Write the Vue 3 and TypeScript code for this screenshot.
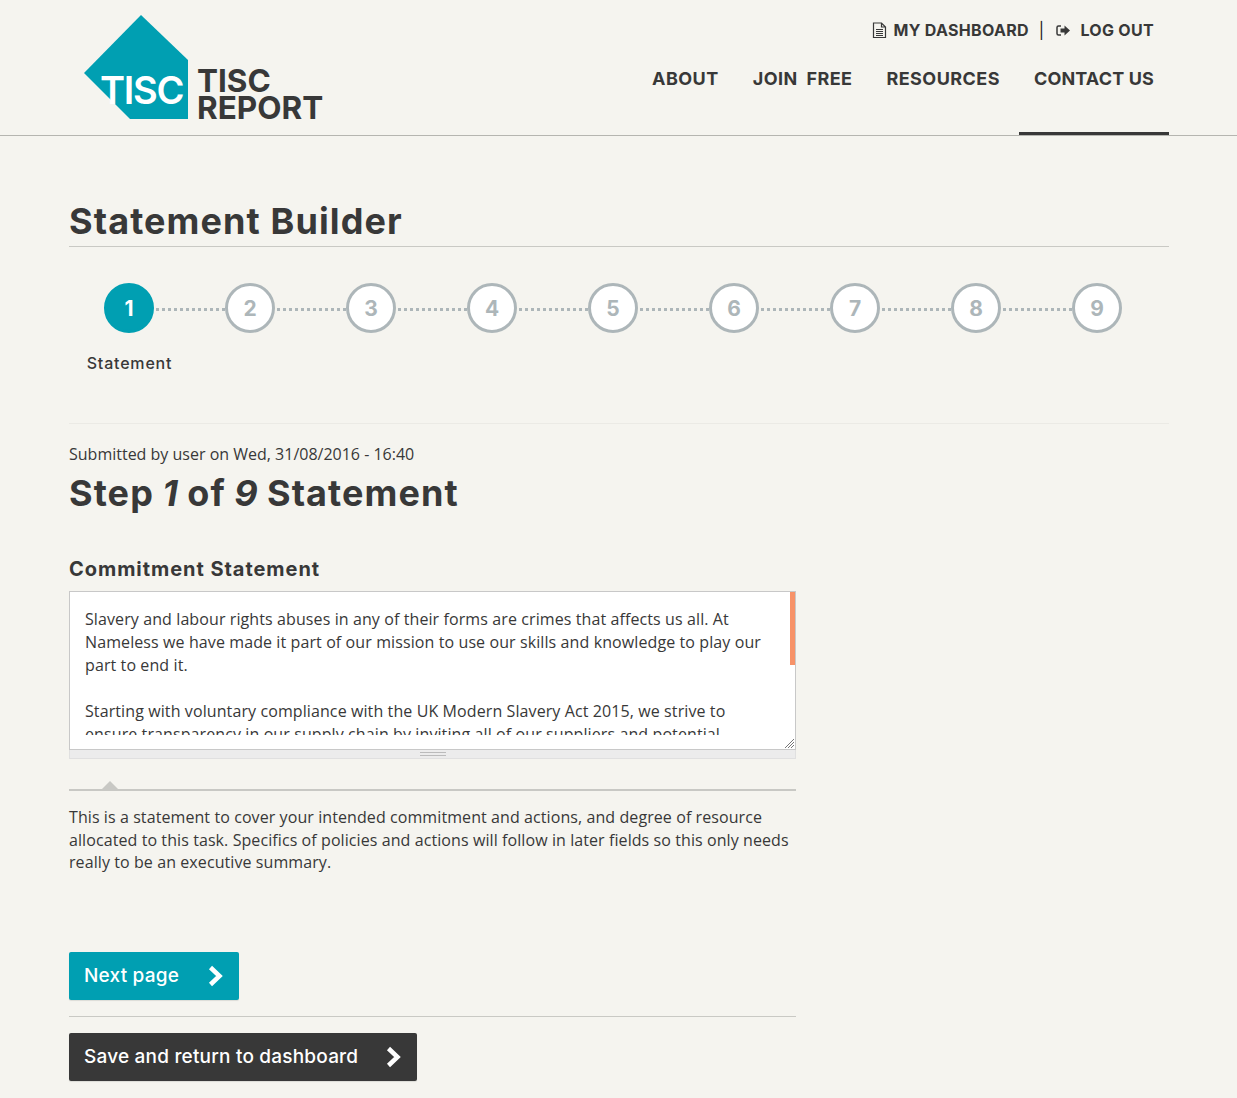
<template>
  <div class="page">
    <header class="site-header">
      <div class="wrap header-inner">
        <a class="logo" href="#">
          <span class="logo-mark">
            <svg width="106" height="106" viewBox="0 0 106 106">
              <path d="M58 1 L105 46 V105 H47 L1 59 Z" fill="#009fb2" />
            </svg>
            <span class="logo-mark-text">TISC</span>
          </span>
          <span class="logo-name">TISC<br />REPORT</span>
        </a>
        <div class="header-right">
          <div class="user-links">
            <svg class="icon" width="15" height="17" viewBox="0 0 15 17">
              <path d="M1.500 1 H9.500 L13.500 5 V15.500 H1.500 Z M9.500 1 V5 H13.500" fill="none" stroke="#383838" stroke-width="1.200" />
              <path d="M4 7.500 H11 M4 9.500 H11 M4 11.500 H11 M4 13.500 H11" stroke="#383838" stroke-width="1" />
            </svg>
            <a href="#">MY DASHBOARD</a>
            <span class="pipe">|</span>
            <svg class="icon logout" width="15" height="13" viewBox="0 0 15 13">
              <path d="M5 2 H2.500 Q1 2 1 3.500 V9.500 Q1 11 2.500 11 H5" fill="none" stroke="#383838" stroke-width="1.500" />
              <path d="M4.500 4.500 H8.500 V1.500 L14 6.500 L8.500 11.500 V8.500 H4.500 Z" fill="#383838" />
            </svg>
            <a href="#">LOG OUT</a>
          </div>
          <nav class="main-nav">
            <a v-for="item in navItems" :key="item" href="#" :class="{ active: item === 'CONTACT US' }">{{ item }}</a>
          </nav>
        </div>
      </div>
    </header>

    <main class="wrap">
      <h1 class="page-title">Statement Builder</h1>

      <ol class="steps">
        <li v-for="n in 9" :key="n" class="step" :class="{ current: n === 1 }">
          <span class="step-num">{{ n }}</span>
          <span v-if="n === 1" class="step-label">Statement</span>
        </li>
      </ol>

      <p class="submitted">Submitted by user on Wed, 31/08/2016 - 16:40</p>
      <h2 class="step-title">Step <em>1</em> of <em>9</em> Statement</h2>

      <div class="form-col">
        <label class="field-label">Commitment Statement</label>
        <div class="textarea-box">
          <div class="textarea-clip">
            <p>Slavery and labour rights abuses in any of their forms are crimes that affects us all. At Nameless we have made it part of our mission to use our skills and knowledge to play our part to end it.</p>
            <p>Starting with voluntary compliance with the UK Modern Slavery Act 2015, we strive to ensure transparency in our supply chain by inviting all of our suppliers and potential</p>
          </div>
          <span class="scroll-thumb"></span>
          <svg class="resizer" width="11" height="11" viewBox="0 0 11 11">
            <path d="M1 10 L10 1 M4 10 L10 4 M7 10 L10 7" stroke="#777" stroke-width="1" />
          </svg>
        </div>
        <div class="grippie"><span></span></div>

        <div class="help">
          <p>This is a statement to cover your intended commitment and actions, and degree of resource allocated to this task. Specifics of policies and actions will follow in later fields so this only needs really to be an executive summary.</p>
        </div>

        <button class="btn btn-next" type="button">
          Next page
          <svg width="16" height="22" viewBox="0 0 16 22"><path d="M2.500 2.500 L11.500 11 L2.500 19.500" fill="none" stroke="#fff" stroke-width="4.500" /></svg>
        </button>
        <div class="btn-sep"></div>
        <button class="btn btn-save" type="button">
          Save and return to dashboard
          <svg width="16" height="22" viewBox="0 0 16 22"><path d="M2.500 2.500 L11.500 11 L2.500 19.500" fill="none" stroke="#fff" stroke-width="4.500" /></svg>
        </button>
      </div>
    </main>
  </div>
</template>

<script setup lang="ts">
const navItems: string[] = ['ABOUT', 'JOIN FREE', 'RESOURCES', 'CONTACT US']
</script>

<style>
html,
body {
  background: #f5f4ef;
}
</style>

<style scoped>
.page {
  height: 1098px;
  overflow: hidden;
  background: #f5f4ef;
  color: #383838;
  font-family: "Open Sans", "Liberation Sans", sans-serif;
  font-size: 16px;
}

.wrap {
  width: 1100px;
  margin-left: 69px;
}

.site-header {
  height: 135px;
  border-bottom: 1px solid #b5b5b0;
}

.header-inner {
  display: flex;
  justify-content: space-between;
  height: 135px;
}

.logo {
  display: flex;
  align-items: flex-start;
  color: #383838;
  text-decoration: none;
  margin-left: 14px;
  padding-top: 14px;
}

.logo-mark {
  position: relative;
  width: 106px;
  height: 106px;
  display: block;
}

.logo-mark-text {
  position: absolute;
  left: 17px;
  top: 52px;
  color: #fff;
  font-family: Inter, sans-serif;
  font-weight: 600;
  font-size: 38px;
  line-height: 48px;
  letter-spacing: -1.300px;
}

.logo-name {
  margin: 53px 0 0 8px;
  font-family: Inter, sans-serif;
  font-weight: 700;
  font-size: 31.500px;
  line-height: 27px;
}

.header-right {
  display: flex;
  flex-direction: column;
  align-items: flex-end;
}

.user-links {
  display: flex;
  align-items: center;
  height: 20px;
  margin: 20px 15px 0 0;
  font-family: Inter, sans-serif;
  font-weight: 700;
  font-size: 16px;
  letter-spacing: 0.300px;
  white-space: nowrap;
}

.user-links a {
  color: #383838;
  text-decoration: none;
}

.icon {
  margin-right: 7px;
}

.icon.logout {
  margin-right: 9px;
}

.pipe {
  margin: 0 12px 0 10px;
  font-weight: 400;
  color: #222;
}

.main-nav {
  display: flex;
  margin-top: 18px;
}

.main-nav a {
  display: block;
  box-sizing: border-box;
  height: 77px;
  padding: 10px 15px 0;
  margin-left: 4px;
  color: #383838;
  text-decoration: none;
  font-family: Inter, sans-serif;
  font-weight: 700;
  font-size: 18px;
  line-height: 22px;
  letter-spacing: 0.450px;
  white-space: nowrap;
}

.main-nav a:nth-child(2) {
  word-spacing: 4px;
}

.main-nav a.active {
  border-bottom: 3px solid #383838;
  letter-spacing: 0.150px;
}

.page-title {
  margin: 64px 0 0;
  padding-bottom: 3px;
  height: 43px;
  border-bottom: 1px solid #c9c9c4;
  font-family: Inter, sans-serif;
  font-weight: 700;
  font-size: 36px;
  line-height: 43px;
  letter-spacing: 1.100px;
}

.steps {
  display: flex;
  list-style: none;
  margin: 0;
  padding: 36px 0 49px;
  height: 91px;
  border-bottom: 1px solid #ebeae5;
}

.step {
  position: relative;
  width: 121px;
  display: flex;
  flex-direction: column;
  align-items: center;
}

.step:not(:last-child)::after {
  content: "";
  position: absolute;
  left: 87px;
  top: 25px;
  width: 69px;
  border-top: 3px dotted #adb6b9;
}

.step-num {
  width: 50px;
  height: 50px;
  margin-right: 1px;
  box-sizing: border-box;
  border: 3px solid #adb6b9;
  border-radius: 50%;
  background: #fff;
  color: #adb6b9;
  font-family: Inter, sans-serif;
  font-weight: 700;
  font-size: 21px;
  line-height: 46px;
  text-align: center;
}

.step.current .step-num {
  background: #009fb2;
  border-color: #009fb2;
  color: #fff;
}

.step-label {
  margin-top: 19px;
  font-family: Inter, sans-serif;
  font-weight: 500;
  font-size: 16px;
  line-height: 22px;
  letter-spacing: 0.800px;
}

.submitted {
  margin: 19px 0 0;
  line-height: 22px;
}

.step-title {
  margin: 6px 0 0;
  font-family: Inter, sans-serif;
  font-weight: 700;
  font-size: 36px;
  line-height: 44px;
  letter-spacing: 1.100px;
  word-spacing: -1.300px;
}

.step-title em {
  font-style: italic;
}

.form-col {
  width: 727px;
}

.field-label {
  display: block;
  margin-top: 39px;
  font-family: Inter, sans-serif;
  font-weight: 700;
  font-size: 20px;
  line-height: 30px;
  letter-spacing: 0.950px;
}

.textarea-box {
  position: relative;
  margin-top: 7px;
  height: 159px;
  box-sizing: border-box;
  border: 1px solid #c8c8c8;
  background: #fff;
  padding: 16px 20px 0 15px;
}

.textarea-clip {
  height: 127px;
  overflow: hidden;
  line-height: 23px;
  letter-spacing: 0.100px;
}

.textarea-clip p {
  margin: 0 0 23px;
}

.scroll-thumb {
  position: absolute;
  top: 0;
  right: 0;
  width: 5px;
  height: 73px;
  background: #f79268;
}

.resizer {
  position: absolute;
  right: 0;
  bottom: 0;
}

.grippie {
  height: 8px;
  background: #ececec;
  border: 1px solid #e0e0e0;
  border-top: none;
  display: flex;
  align-items: center;
  justify-content: center;
}

.grippie span {
  width: 26px;
  height: 4px;
  border-top: 1px solid #bbb;
  border-bottom: 1px solid #bbb;
  box-sizing: border-box;
}

.help {
  position: relative;
  margin-top: 30px;
  padding-top: 15px;
  border-top: 2px solid #c8c8c4;
  line-height: 22.500px;
  letter-spacing: 0.085px;
}

.help::before {
  content: "";
  position: absolute;
  left: 32px;
  top: -10px;
  border-left: 9px solid transparent;
  border-right: 9px solid transparent;
  border-bottom: 9px solid #c8c8c4;
}

.help p {
  margin: 0;
}

.btn {
  display: flex;
  align-items: center;
  height: 48px;
  border: none;
  border-radius: 2px;
  color: #fff;
  font-family: Inter, sans-serif;
  font-weight: 500;
  font-size: 19px;
  letter-spacing: 0.200px;
  padding: 0 0 0 15px;
  white-space: nowrap;
  box-shadow: 0 1px 1px rgba(0, 0, 0, 0.1);
}

.btn svg {
  margin-left: auto;
  margin-right: 15px;
}

.btn-next {
  width: 170px;
  margin-top: 78px;
  background: #009fb2;
}

.btn-sep {
  margin-top: 16px;
  border-top: 1px solid #c9c9c4;
}

.btn-save {
  width: 348px;
  margin-top: 16px;
  background: #383838;
}
</style>
